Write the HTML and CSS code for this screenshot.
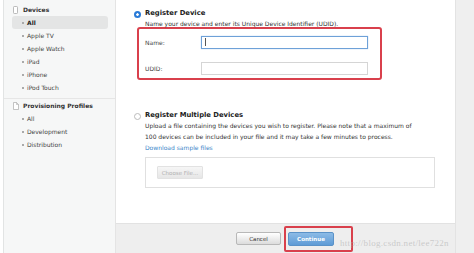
FILE: index.html
```html
<!DOCTYPE html>
<html>
<head>
<meta charset="utf-8">
<link rel="stylesheet" href="styles.css">
</head>
<body>
<div class="page">
  <div class="gutter"></div>
  <aside class="sidebar">
    <div class="group-head">
      <svg class="ico" width="6" height="8" viewBox="0 0 6 8"><rect x="0.5" y="0.5" width="4" height="7" rx="0.8" fill="#fff" stroke="#aaa" stroke-width="0.8"/></svg>
      <span>Devices</span>
    </div>
    <div class="item selected"><i class="dot"></i>All</div>
    <div class="item"><i class="dot"></i>Apple TV</div>
    <div class="item"><i class="dot"></i>Apple Watch</div>
    <div class="item"><i class="dot"></i>iPad</div>
    <div class="item"><i class="dot"></i>iPhone</div>
    <div class="item"><i class="dot"></i>iPod Touch</div>
    <div class="sep"></div>
    <div class="group-head">
      <svg class="ico" width="6" height="8" viewBox="0 0 6 8"><path d="M0.5 0.5 H3.5 L5.5 2.5 V7.5 H0.5 Z" fill="#fff" stroke="#aaa" stroke-width="0.7"/><path d="M3.5 0.5 V2.5 H5.5" fill="none" stroke="#aaa" stroke-width="0.6"/></svg>
      <span>Provisioning Profiles</span>
    </div>
    <div class="item"><i class="dot"></i>All</div>
    <div class="item"><i class="dot"></i>Development</div>
    <div class="item"><i class="dot"></i>Distribution</div>
  </aside>
  <main class="main">
    <div class="content">
      <section class="option first">
        <span class="radio on"></span>
        <div class="opt-body">
          <div class="title">Register Device</div>
          <div class="desc">Name your device and enter its Unique Device Identifier (UDID).</div>
        </div>
      </section>
      <div class="redbox">
        <div class="field">
          <label>Name:</label>
          <div class="input focus"><span class="caret"></span></div>
        </div>
        <div class="field">
          <label>UDID:</label>
          <div class="input"></div>
        </div>
      </div>
      <section class="option second">
        <span class="radio"></span>
        <div class="opt-body">
          <div class="title">Register Multiple Devices</div>
          <div class="desc">Upload a file containing the devices you wish to register. Please note that a maximum of<br>100 devices can be included in your file and it may take a few minutes to process.</div>
          <a class="link">Download sample files</a>
        </div>
      </section>
      <div class="filebox">
        <span class="choose">Choose File...</span>
      </div>
    </div>
    <footer class="footer">
      <span class="btn cancel">Cancel</span>
      <span class="mark"><span class="btn primary">Continue</span></span>
    </footer>
    <div class="watermark">http://blog.csdn.net/lee722n</div>
  </main>
  <div class="rightcol"></div>
</div>
</body>
</html>
```
FILE: styles.css
```css
* { box-sizing: border-box; }
html, body { margin: 0; padding: 0; }
body {
  width: 474px;
  height: 253px;
  overflow: hidden;
  background: #fff;
  font-family: "DejaVu Sans", "Liberation Sans", sans-serif;
  font-size: 6px;
  color: #333;
}
.page {
  display: flex;
  height: 253px;
}
.gutter {
  width: 3px;
  background: #fff;
}
.sidebar {
  width: 113px;
  background: #f6f7f7;
  border-left: 1px solid #e2e4e4;
  border-right: 1px solid #e4e4e4;
  padding: 3px 7px 0 8px;
}
.group-head {
  height: 13px;
  display: flex;
  align-items: center;
  gap: 4px;
  font-weight: bold;
  color: #333;
  padding-left: 1px;
  font-size: 6px;
}
.ico { display: block; }
.item {
  height: 13px;
  display: flex;
  align-items: center;
  padding-left: 10px;
  color: #444;
}
.item.selected {
  background: #e4e5e5;
  border-radius: 3px;
  font-weight: bold;
  color: #222;
}
.dot {
  width: 2px;
  height: 2px;
  background: #aaa;
  margin-right: 3px;
  display: inline-block;
}
.sep {
  height: 1px;
  background: #e6e6e6;
  margin: 4px -7px 0 -8px;
}
.main {
  width: 339px;
  display: flex;
  flex-direction: column;
  position: relative;
}
.content {
  flex: 1;
  padding: 8px 0 0 18px;
}
.option {
  display: flex;
  gap: 4px;
}
.radio {
  width: 7px;
  height: 7px;
  border-radius: 50%;
  border: 1px solid #bbb;
  background: #fff;
  margin-top: 3px;
  flex: none;
}
.radio.on {
  border: 2px solid #2a7bd8;
  background: #fff;
  box-shadow: inset 0 0 0 1px #fff;
  background: radial-gradient(circle, #fff 0 1px, #2a7bd8 1.2px);
}
.title {
  font-weight: bold;
  font-size: 6.8px;
  color: #222;
  line-height: 10px;
}
.desc {
  line-height: 11px;
  color: #333;
  font-size: 6px;
}
.redbox {
  margin: -2px 0 0 3px;
  width: 245px;
  height: 53px;
  border: 2px solid #d9404c;
  border-radius: 3px;
  padding: 6px 0 0 6px;
  display: flex;
  flex-direction: column;
  gap: 12px;
}
.field {
  display: flex;
  align-items: center;
  height: 14px;
}
.field label {
  width: 56px;
  color: #444;
}
.input {
  width: 167px;
  height: 13px;
  border: 1px solid #d5d5d5;
  background: #fff;
  display: flex;
  align-items: center;
  padding-left: 3px;
}
.input.focus {
  border: 1px solid #6ea1d8;
  box-shadow: 0 0 1px #9fc3ea;
}
.caret {
  width: 1px;
  height: 8px;
  background: #555;
}
.option.second {
  margin-top: 30px;
}
.link {
  display: block;
  color: #3b86c9;
  line-height: 11px;
}
.filebox {
  margin: 4px 0 0 11px;
  width: 290px;
  height: 31px;
  border: 1px solid #e0e0e0;
  background: #fff;
  display: flex;
  align-items: center;
  padding-left: 11px;
}
.choose {
  width: 46px;
  height: 13px;
  border: 1px solid #e2e2e2;
  background: linear-gradient(#f6f6f6, #e6e6e6);
  color: #b0b0b0;
  display: flex;
  align-items: center;
  justify-content: center;
  font-size: 5.5px;
  border-radius: 1px;
}
.footer {
  height: 30px;
  background: #eeeeee;
  border-top: 1px solid #e2e2e2;
  display: flex;
  align-items: center;
  padding-left: 120px;
  gap: 3px;
}
.btn {
  height: 13px;
  display: flex;
  align-items: center;
  justify-content: center;
  font-size: 5.5px;
  border-radius: 2px;
}
.cancel {
  width: 45px;
  border: 1px solid #b8b8b8;
  background: linear-gradient(#ffffff, #dcdcdc);
  color: #333;
}
.mark {
  width: 69px;
  height: 26px;
  border: 2px solid #d9404c;
  border-radius: 2px;
  display: flex;
  align-items: center;
  padding-left: 2px;
}
.primary {
  width: 46px;
  height: 14px;
  background: linear-gradient(#8cbbe6, #5e9bd6);
  border: 1px solid #5a92c8;
  color: #fff;
  font-weight: bold;
}
.watermark {
  position: absolute;
  left: 224px;
  top: 238px;
  font-family: "Liberation Serif", serif;
  font-size: 9px;
  color: rgba(170,170,170,0.55);
  white-space: nowrap;
  letter-spacing: 0.3px;
}
.rightcol {
  flex: 1;
  background: #efefef;
  border-left: 1px solid #e3e3e3;
}
```
